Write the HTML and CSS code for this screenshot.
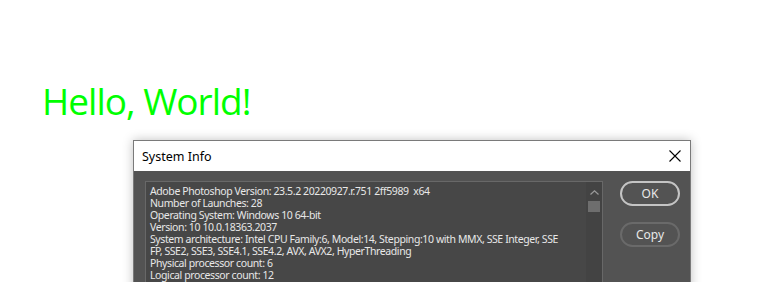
FILE: index.html
```html
<!DOCTYPE html>
<html>
<head>
<meta charset="utf-8">
<link rel="stylesheet" href="styles.css">
</head>
<body>
<h1 class="hello">Hello, World!</h1>
<div class="dialog">
  <div class="titlebar">
    <span class="title">System Info</span>
    <svg class="close" width="12" height="12" viewBox="0 0 12 12"><path d="M0.5 0.5 L11.5 11.5 M11.5 0.5 L0.5 11.5" stroke="#000" stroke-width="1.1" fill="none"/></svg>
  </div>
  <div class="content">
    <div class="infobox">
      <div class="text">
        <div>Adobe Photoshop Version: 23.5.2 20220927.r.751 2ff5989&nbsp; x64</div>
        <div>Number of Launches: 28</div>
        <div>Operating System: Windows 10 64-bit</div>
        <div>Version: 10 10.0.18363.2037</div>
        <div>System architecture: Intel CPU Family:6, Model:14, Stepping:10 with MMX, SSE Integer, SSE<br>FP, SSE2, SSE3, SSE4.1, SSE4.2, AVX, AVX2, HyperThreading</div>
        <div>Physical processor count: 6</div>
        <div>Logical processor count: 12</div>
      </div>
      <div class="scrollbar">
        <svg class="arrow" width="9" height="5" viewBox="0 0 9 5"><path d="M0.5 4.5 L4.5 0.8 L8.5 4.5" stroke="#9a9a9a" stroke-width="1.2" fill="none"/></svg>
        <div class="thumb"></div>
      </div>
    </div>
    <div class="buttons">
      <div class="btn btn-ok">OK</div>
      <div class="btn btn-copy">Copy</div>
    </div>
  </div>
</div>
</body>
</html>
```
FILE: styles.css
```css
html, body {
  margin: 0;
  padding: 0;
  background: #ffffff;
  overflow: hidden;
}
body {
  width: 765px;
  height: 282px;
}
.hello {
  margin: 0;
  padding: 78px 0 0 42px;
  font-family: "Open Sans", sans-serif;
  font-weight: 400;
  font-size: 37px;
  line-height: 46px;
  color: #00ff00;
  letter-spacing: -1px;
}
.dialog {
  margin: 16px 0 0 133px;
  width: 556px;
  border: 1px solid #7a7a7a;
  border-bottom: none;
  box-shadow: 0 0 10px rgba(0,0,0,0.25);
  background: #535353;
  height: 200px;
}
.titlebar {
  height: 30px;
  background: #ffffff;
  display: flex;
  align-items: center;
  justify-content: space-between;
  padding: 0 9px 0 8px;
}
.title {
  font-family: "Noto Sans", sans-serif;
  font-size: 12.5px;
  color: #000;
  padding-top: 1px;
}
.close {
  display: block;
  margin-top: -1px;
}
.content {
  display: flex;
  padding: 10px 0 0 11px;
  gap: 17px;
}
.infobox {
  width: 456px;
  height: 120px;
  border: 1px solid #686868;
  background: #474747;
  display: flex;
}
.text {
  flex: 1;
  padding: 3px 4px 0 4px;
  font-family: "Noto Sans", sans-serif;
  font-size: 10.5px;
  letter-spacing: -0.4px;
  line-height: 12px;
  color: #e8e8e8;
  overflow: hidden;
  white-space: nowrap;
}
.scrollbar {
  width: 16px;
  background: #434343;
  display: flex;
  flex-direction: column;
  align-items: center;
}
.arrow {
  display: block;
  margin-top: 8px;
}
.thumb {
  width: 12px;
  height: 11px;
  background: #6e6e6e;
  margin-top: 6px;
}
.buttons {
  display: flex;
  flex-direction: column;
  gap: 16px;
  padding-top: 0;
}
.btn {
  width: 56px;
  height: 21px;
  border-radius: 13px;
  font-family: "Noto Sans", sans-serif;
  font-size: 12px;
  color: #e8e8e8;
  display: flex;
  align-items: center;
  justify-content: center;
}
.btn-ok {
  border: 2px solid #c4c4c4;
}
.btn-copy {
  border: 2px solid #6a6a6a;
}
```
